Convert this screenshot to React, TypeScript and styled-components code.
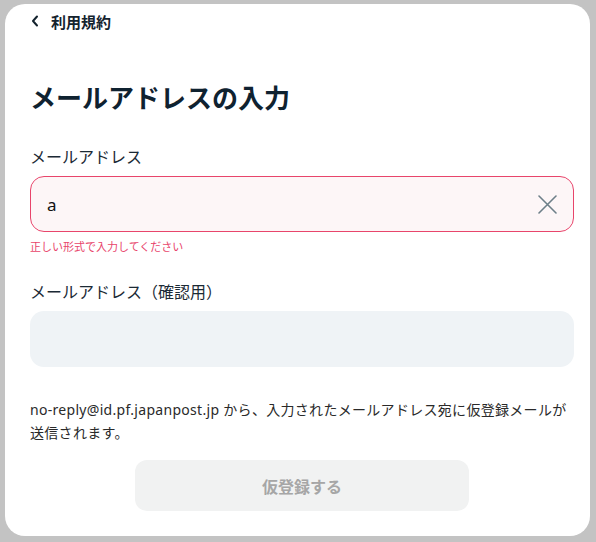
import React, { useState } from "react";
import styled, { createGlobalStyle } from "styled-components";

const GlobalStyle = createGlobalStyle`
  html, body {
    margin: 0;
    padding: 0;
    background: #c3c3c3;
  }
  body {
    font-family: "Noto Sans CJK JP", "Noto Sans", sans-serif;
    color: #1b2a35;
  }
  * {
    box-sizing: border-box;
  }
`;

const Frame = styled.div`
  width: 596px;
  height: 542px;
  padding: 4px 6px 6px 5px;
`;

const Card = styled.div`
  height: 100%;
  background: #ffffff;
  border-radius: 20px;
  padding: 0 16px 0 25px;
  display: flex;
  flex-direction: column;
  overflow: hidden;
`;

const BackLink = styled.a`
  height: 34px;
  display: flex;
  align-items: center;
  gap: 12px;
  padding-left: 1px;
  color: #14232e;
  font-size: 15px;
  font-weight: 700;
  text-decoration: none;
  cursor: pointer;
`;

const Title = styled.h1`
  margin: 41px 0 0;
  font-size: 26px;
  line-height: 36px;
  font-weight: 700;
  color: #0f2230;
  letter-spacing: 0;
`;

const Label = styled.label<{ $top: number }>`
  display: block;
  margin-top: ${(p) => p.$top}px;
  font-size: 16px;
  line-height: 24px;
  color: #1b2a35;
`;

const Field = styled.div<{ $error?: boolean }>`
  margin-top: 8px;
  height: 56px;
  border-radius: 14px;
  border: 1px solid ${(p) => (p.$error ? "#e8456b" : "transparent")};
  background: ${(p) => (p.$error ? "#fdf6f7" : "#eff3f6")};
  display: flex;
  align-items: center;
  padding: 0 16px 0 16px;
`;

const Input = styled.input`
  flex: 1;
  border: none;
  outline: none;
  background: transparent;
  font-family: "Noto Sans", "Noto Sans CJK JP", sans-serif;
  font-size: 17px;
  color: #111;
  padding: 0;
`;

const ClearButton = styled.button`
  border: none;
  background: transparent;
  padding: 0;
  width: 20px;
  height: 20px;
  display: flex;
  align-items: center;
  justify-content: center;
  cursor: pointer;
`;

const ErrorText = styled.p`
  margin: 6px 0 0;
  font-size: 11px;
  line-height: 16px;
  color: #e8456b;
`;

const Note = styled.p`
  margin: 31px 0 0;
  font-family: "Noto Sans", "Noto Sans CJK JP", sans-serif;
  font-size: 14px;
  line-height: 23px;
  letter-spacing: 0.3px;
  color: #2a2a2a;
`;

const Actions = styled.div`
  margin-top: 16px;
  display: flex;
  justify-content: center;
`;

const SubmitButton = styled.button`
  width: 334px;
  height: 51px;
  border: none;
  border-radius: 12px;
  background: #f1f2f2;
  color: #a6a6a6;
  font-family: inherit;
  font-size: 16px;
  font-weight: 700;
`;

function Chevron() {
  return (
    <svg width="8" height="12" viewBox="0 0 8 12" fill="none">
      <path d="M6 1.5 L2 6 L6 10.5" stroke="#14232e" strokeWidth="2" strokeLinecap="round" strokeLinejoin="round" />
    </svg>
  );
}

function CloseIcon() {
  return (
    <svg width="19" height="19" viewBox="0 0 19 19" fill="none">
      <path d="M1 1 L18 18 M18 1 L1 18" stroke="#6d7f88" strokeWidth="1.6" strokeLinecap="round" />
    </svg>
  );
}

export default function App() {
  const [email, setEmail] = useState("a");
  const [confirm, setConfirm] = useState("");

  return (
    <Frame>
      <GlobalStyle />
      <Card>
        <BackLink>
          <Chevron />
          利用規約
        </BackLink>
        <Title>メールアドレスの入力</Title>

        <Label $top={29}>メールアドレス</Label>
        <Field $error>
          <Input value={email} onChange={(e) => setEmail(e.target.value)} />
          <ClearButton onClick={() => setEmail("")}>
            <CloseIcon />
          </ClearButton>
        </Field>
        <ErrorText>正しい形式で入力してください</ErrorText>

        <Label $top={25}>メールアドレス（確認用）</Label>
        <Field>
          <Input value={confirm} onChange={(e) => setConfirm(e.target.value)} />
        </Field>

        <Note>
          no-reply@id.pf.japanpost.jp から、入力されたメールアドレス宛に仮登録メールが送信されます。
        </Note>

        <Actions>
          <SubmitButton disabled>仮登録する</SubmitButton>
        </Actions>
      </Card>
    </Frame>
  );
}
